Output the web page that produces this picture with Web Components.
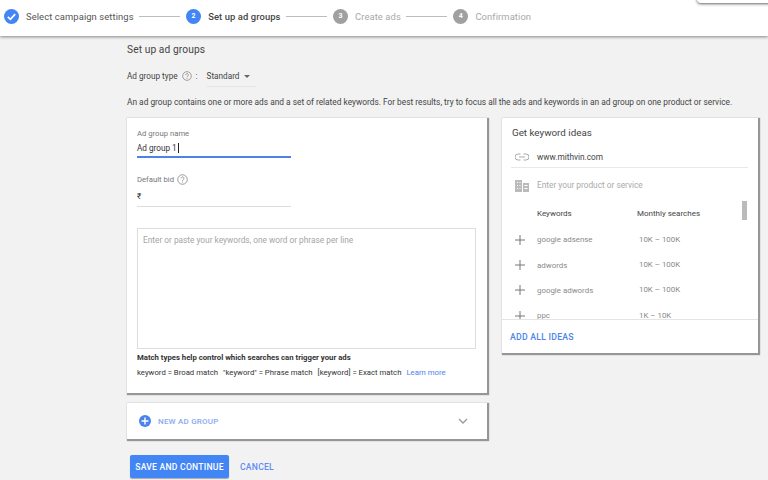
<!DOCTYPE html>
<html lang="en"><head><meta charset="utf-8"><title>Set up ad groups</title>
<style>
html,body{margin:0;height:480px;overflow:hidden;background:#f2f2f2;font-family:Roboto,"Liberation Sans",sans-serif;color:#3c4043}
</style></head><body>
<app-page></app-page>
<script>
const HELP=(s)=>`<svg width="${s}" height="${s}" viewBox="0 0 12 12" fill="none" stroke="#777" stroke-width=".8"><circle cx="6" cy="6" r="5.2"/><path d="M4.4 4.8a1.6 1.6 0 1 1 2.5 1.3C6.3 6.5 6 6.8 6 7.5M6 8.4v1"/></svg>`;
function def(name,css,html){
  customElements.define(name,class extends HTMLElement{
    constructor(){super();const r=this.attachShadow({mode:'open'});
      r.innerHTML=`<style>${css}</style>`+(typeof html==='function'?html(this):html);}
  });
}
def('step-item',`:host{display:flex;align-items:center;gap:7px;font-size:9.4px;letter-spacing:.1px;color:#555;white-space:nowrap}
 :host([todo]){color:#a8a8a8}:host([current]){color:#444;font-weight:500}
 .n{width:15px;height:15px;border-radius:50%;background:#a0a0a0;color:#fff;font-size:7px;font-weight:700;display:flex;align-items:center;justify-content:center}
 :host([current]) .n,:host([done]) .n{background:#4285f4}
 svg{display:block}`,
 el=>`<span class="n">${el.hasAttribute('done')?'<svg width="11" height="11" viewBox="0 0 12 12" fill="none" stroke="#fff" stroke-width="1.9"><path d="M2 6.3l2.8 2.8L10 3.4"/></svg>':(el.getAttribute('n')||'')}</span><slot></slot>`);
def('step-line',`:host{display:block;width:41px;height:1px;background:#bdbdbd;margin:0 6.5px 0 5px}`,``);
def('top-bar',`:host{display:flex;align-items:center;box-sizing:border-box;height:36px;padding:0 0 4px 4px;background:#fff;box-shadow:0 1px 3px rgba(0,0,0,.45);position:relative;z-index:2}`,`<slot></slot>`);
def('account-pop',`:host{position:absolute;left:697px;top:-6px;width:90px;height:9px;background:#fff;border-radius:4px;box-shadow:0 1px 3px rgba(0,0,0,.6);z-index:3}`,``);
def('ui-card',`:host{display:block;box-sizing:border-box;background:#fff;box-shadow:1px 1px 1px 1px rgba(0,0,0,.38)}`,`<slot></slot>`);
def('text-field',`:host{display:block;width:154px;font-size:7.7px;color:#777}
 .v{font-size:8.2px;color:#333;height:22px;box-sizing:border-box;padding-top:2px;display:flex;align-items:center}
 :host([active]) .v{height:18px;padding:4px 0 3px}
 .u{height:1px;background:#ddd}
 :host([active]) .u{height:2px;background:#4b83ea}
 .l{display:flex;align-items:center;gap:3px;height:10px}
 .c{display:inline-block;width:1px;height:10px;background:#222;margin-left:1px}`,
 el=>`<div class="l"><slot name="label"></slot></div><div class="v"><slot></slot>${el.hasAttribute('active')?'<span class="c"></span>':''}</div><div class="u"></div>`);
def('match-help',`:host{display:block;font-size:7.75px;color:#333}
 b{display:block;font-weight:700;color:#333;height:13px;line-height:13px}
 .r{display:flex;align-items:center;height:13px;margin-top:2px;white-space:nowrap}
 span{margin-right:5px} a{color:#4b83ea}`,
 `<b>Match types help control which searches can trigger your ads</b><div class="r"><span>keyword = Broad match</span><span>"keyword" = Phrase match</span><span>[keyword] = Exact match</span><a>Learn more</a></div>`);
def('idea-row',`:host{display:grid;grid-template-columns:35px 100px 1fr;align-items:center;height:25.4px;font-size:7.9px;color:#8a8a8a;white-space:nowrap}
 svg{display:block;margin-left:13px}.m{padding-left:2px;position:relative;top:-.5px}`,
 el=>`<svg width="10" height="10" viewBox="0 0 10 10" stroke="#777" stroke-width="1"><path d="M5 0v10M0 5h10"/></svg><span><slot></slot></span><span class="m">${el.getAttribute('vol')}</span>`);
def('keyword-ideas',`:host{display:flex;flex:none;flex-direction:column;width:256px;height:235px;box-sizing:border-box;background:#fff;box-shadow:1px 1px 1px 1px rgba(0,0,0,.38)}
 h3{margin:0;font-size:9.8px;font-weight:400;color:#444;padding:9px 10px 0;height:12px;line-height:12px}
 .in{display:flex;align-items:center;gap:8px;font-size:8.3px;margin:0 10px 0 13px;color:#444}
 .url{margin:7px 10px 0 9px;height:21px;border-bottom:1px solid #e8e8e8;padding-left:4px}
 .in.p{color:#aaa;height:34px;font-size:8.3px}
 .hd{display:grid;grid-template-columns:35px 100px 1fr;font-size:8px;color:#444;height:16px;line-height:16px;margin-top:4px;white-space:nowrap}
 .list{flex:1;min-height:0;overflow:hidden;padding-top:5px}
 .bar{position:absolute;right:11px;top:62px;width:5px;height:19px;background:#bbb}
 .rows{height:100%;overflow:hidden}
 .foot{flex:none;box-sizing:border-box;height:34px;border-top:1px solid #e4e4e4;display:flex;align-items:center;padding-left:8px;font-size:8.7px;font-weight:500;letter-spacing:.25px;color:#4b83ea}
 svg{display:block;flex:none}
 .wrap{position:relative;display:flex;flex-direction:column;flex:1;min-height:0}`,
 `<h3>Get keyword ideas</h3>
 <div class="wrap"><div class="in url"><svg width="14" height="8" viewBox="0 0 14 8" fill="none" stroke="#aaa" stroke-width="1"><path d="M5.5 1H3a3 3 0 0 0 0 6h2.500M8.500 1H11a3 3 0 0 1 0 6H8.500M4 4h6"/></svg><span>www.mithvin.com</span></div>
 <div class="in p"><svg width="14" height="13" viewBox="0 0 14 13" fill="#bbb"><path d="M0 1h7v12H0zM8 4h6v9H8z"/><path d="M2 3h1v1H2zM4.500 3h1v1h-1zM2 6h1v1H2zM4.500 6h1v1h-1zM2 9h1v1H2zM4.500 9h1v1h-1zM9.500 6h3v1h-3zM9.500 9h3v1h-3z" fill="#fff"/></svg><span>Enter your product or service</span></div>
 <div class="hd"><span></span><span>Keywords</span><span>Monthly searches</span></div>
 <div class="list"><div class="rows"><slot></slot></div></div>
 <div class="bar"></div></div>
 <div class="foot">ADD ALL IDEAS</div>`);
def('new-group',`:host{display:flex;align-items:center;box-sizing:border-box;width:360px;height:36px;background:#fff;padding:0 19px 0 12px;box-shadow:1px 1px 1px 1px rgba(0,0,0,.38);font-size:8px;letter-spacing:.2px;font-weight:500;color:#8aa9ee}
 .i{width:12px;height:12px;border-radius:50%;background:#4b83ea;display:flex;align-items:center;justify-content:center;margin-right:7px}
 span.t{flex:1}`,
 `<span class="i"><svg width="8" height="8" viewBox="0 0 8 8" stroke="#fff" stroke-width="1.400"><path d="M4 .5v7M.5 4h7"/></svg></span><span class="t">NEW AD GROUP</span><svg width="10" height="6" viewBox="0 0 10 6" fill="none" stroke="#999" stroke-width="1.300"><path d="M1 1l4 4 4-4"/></svg>`);
def('action-bar',`:host{display:flex;align-items:center;gap:11px;margin:16px 0 0 3px}
 .s{box-sizing:border-box;width:99px;height:23px;background:#4285f4;color:#fff;border-radius:2px;display:flex;align-items:center;justify-content:center;font-size:8.6px;font-weight:500;letter-spacing:.25px;box-shadow:0 1px 1px rgba(0,0,0,.3)}
 .c{font-size:8.6px;font-weight:500;letter-spacing:.25px;color:#5f8df0}`,
 `<div class="s">SAVE AND CONTINUE</div><div class="c">CANCEL</div>`);
def('app-page',`:host{display:block;height:480px;position:relative;overflow:hidden}
 main{display:block;padding:8px 0 0 127px;width:768px;box-sizing:border-box}
 h2{margin:0;font-size:10.2px;font-weight:400;color:#444;height:12px;line-height:12px;letter-spacing:.1px}
 .type{display:flex;align-items:flex-start;margin-top:13px;font-size:8.2px;color:#444;height:18px}
 .type>span.k{line-height:14px;display:flex;align-items:center;gap:4px}
 .sel{margin-left:9px;width:49px;height:17px;border-bottom:1px solid #e4e4e4;display:flex;gap:5px;align-items:flex-start;line-height:14px}
 .sel i{display:block;width:0;height:0;border-style:solid;border-color:#666 transparent transparent;border-width:3px 3.5px 0;margin-top:6px}
 p{margin:10px 0 0;font-size:8.34px;height:10px;line-height:10px;color:#444;white-space:nowrap}
 .cols{display:flex;align-items:flex-start;gap:15px;margin-top:11px}
 .left{width:360px;flex:none;display:flex;flex-direction:column}
 .form{display:block;height:275px;padding:10px 10px 0;box-sizing:border-box}
 .bid{margin-top:16px}
 .area{box-sizing:border-box;width:339px;height:121px;margin-top:21px;border:1px solid #ddd;padding:6px 5px;font-size:8.3px;color:#a5a5a5;background:#fff}
 match-help{margin-top:2px}
 new-group{margin-top:10px}
 .lab{display:inline-flex;gap:3px;align-items:center}`,
 `<top-bar>
   <step-item done>Select campaign settings</step-item><step-line></step-line>
   <step-item current n="2">Set up ad groups</step-item><step-line></step-line>
   <step-item todo n="3">Create ads</step-item><step-line></step-line>
   <step-item todo n="4">Confirmation</step-item>
 </top-bar>
 <account-pop></account-pop>
 <main>
  <h2>Set up ad groups</h2>
  <div class="type"><span class="k">Ad group type ${HELP(10)} :</span><div class="sel">Standard <i></i></div></div>
  <p>An ad group contains one or more ads and a set of related keywords. For best results, try to focus all the ads and keywords in an ad group on one product or service.</p>
  <div class="cols">
   <div class="left">
    <ui-card class="form">
      <text-field active><span slot="label">Ad group name</span>Ad group 1</text-field>
      <text-field class="bid"><span slot="label" class="lab">Default bid ${HELP(11)}</span>₹</text-field>
      <div class="area">Enter or paste your keywords, one word or phrase per line</div>
      <match-help></match-help>
    </ui-card>
    <new-group></new-group>
    <action-bar></action-bar>
   </div>
   <keyword-ideas>
    <idea-row vol="10K – 100K">google adsense</idea-row>
    <idea-row vol="10K – 100K">adwords</idea-row>
    <idea-row vol="10K – 100K">google adwords</idea-row>
    <idea-row vol="1K – 10K">ppc</idea-row>
   </keyword-ideas>
  </div>
 </main>`);
</script>
</body></html>
